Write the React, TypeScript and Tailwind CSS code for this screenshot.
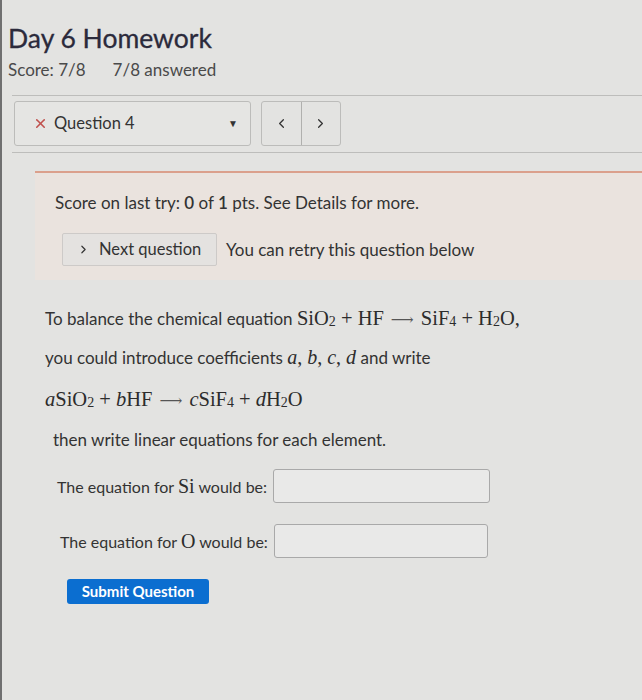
import { X, ChevronLeft, ChevronRight, ChevronRight as Caret } from "lucide-react";

const serif = "font-['Liberation_Serif','DejaVu_Serif',serif]";

function M({ children, size = "text-[20px]" }: { children: React.ReactNode; size?: string }) {
  return <span className={`${serif} ${size} text-[#2c2c2c]`}>{children}</span>;
}

function Sub({ children }: { children: React.ReactNode }) {
  return <sub className="text-[14px] relative -bottom-[1px]">{children}</sub>;
}

function Arrow() {
  return <span className="mx-[7px] text-[16px] text-[#555]">⟶</span>;
}

function AnswerRow({ el, labelPad, boxW }: { el: string; labelPad: string; boxW: string }) {
  return (
    <div className={`flex items-center ${labelPad}`}>
      <span className="text-[16px] text-[#333]">
        The equation for <M>{el}</M> would be:
      </span>
      <div className={`ml-[6px] h-[34px] ${boxW} rounded-[3px] border border-[#a9a9a9] bg-[#e9e9e8]`} />
    </div>
  );
}

export default function App() {
  return (
    <div className="w-[642px] h-[700px] overflow-hidden bg-[#e3e3e1] border-l-2 border-[#707070] font-['Lato','Open_Sans',sans-serif]">
      <div className="pt-[21px] pl-[6px]">
        <h1 className="text-[26.5px] leading-[34px] text-[#2b2a3b] [-webkit-text-stroke:0.3px_#2b2a3b]">Day 6 Homework</h1>
        <div className="mt-[2px] text-[17px] text-[#4a4a4a] flex gap-[27px]">
          <span>Score: 7/8</span>
          <span>7/8 answered</span>
        </div>
      </div>

      {/* question picker + prev/next */}
      <div className="mt-[12px] ml-[10px] border-t border-b border-[#bdbdbb] pt-[5px] pb-[6px] pl-[2px] flex gap-[10px]">
        <div className="w-[237px] h-[45px] rounded-[3px] border border-[#bcbcba] bg-[#e5e5e3] flex items-center pl-[18px] pr-[10px]">
          <X className="w-[15px] h-[15px] text-[#c0504d]" strokeWidth={2.5} />
          <span className="ml-[6px] text-[16.5px] text-[#333]">Question 4</span>
          <span className="ml-auto mr-[2px] text-[10px] text-[#333]">▼</span>
        </div>
        <div className="w-[80px] h-[45px] rounded-[3px] border border-[#bcbcba] flex">
          <div className="flex-1 flex items-center justify-center border-r border-[#b0b0ae]">
            <ChevronLeft className="w-[15px] h-[15px] text-[#333]" strokeWidth={2} />
          </div>
          <div className="flex-1 flex items-center justify-center">
            <ChevronRight className="w-[15px] h-[15px] text-[#333]" strokeWidth={2} />
          </div>
        </div>
      </div>

      {/* last try notice */}
      <div className="mt-[18px] ml-[33px] border-t-2 border-[#dba08c] bg-[#eae3de] h-[109px] pl-[20px] pt-[17px]">
        <p className="text-[17px] text-[#333]">
          Score on last try: <span className="font-semibold">0</span> of <span className="font-semibold">1</span> pts. See Details for more.
        </p>
        <div className="mt-[18px] ml-[7px] flex items-center">
          <div className="h-[33px] w-[155px] rounded-[2px] border border-[#cdcac8] bg-[#e4e2e0] flex items-center pl-[14px]">
            <Caret className="w-[13px] h-[13px] text-[#333]" strokeWidth={2.2} />
            <span className="ml-[9px] text-[16.5px] text-[#333]">Next question</span>
          </div>
          <span className="ml-[9px] text-[17px] text-[#333]">You can retry this question below</span>
        </div>
      </div>

      <div className="pl-[43px] pt-[25px]">
        <p className="text-[17px] text-[#333] leading-[26px]">
          To balance the chemical equation{" "}
          <M size="text-[20.5px]">
            SiO<Sub>2</Sub> + HF<Arrow />SiF<Sub>4</Sub> + H<Sub>2</Sub>O,
          </M>
        </p>
        <p className="mt-[11px] text-[17px] text-[#333] leading-[26px]">
          you could introduce coefficients{" "}
          <M>
            <i>a</i>, <i>b</i>, <i>c</i>, <i>d</i>
          </M>{" "}
          and write
        </p>
        <p className="mt-[15px] leading-[26px]">
          <M size="text-[20.5px]">
            <i>a</i>SiO<Sub>2</Sub> + <i>b</i>HF<Arrow /><i>c</i>SiF<Sub>4</Sub> + <i>d</i>H<Sub>2</Sub>O
          </M>
        </p>
        <p className="mt-[13px] ml-[8px] text-[17px] text-[#333] leading-[26px]">
          then write linear equations for each element.
        </p>

        <div className="mt-[16px] flex flex-col gap-[21px]">
          <AnswerRow el="Si" labelPad="pl-[12px]" boxW="w-[217px]" />
          <AnswerRow el="O" labelPad="pl-[15px]" boxW="w-[214px]" />
        </div>

        <button className="mt-[21px] ml-[22px] h-[25px] w-[142px] rounded-[3px] bg-[#0b6ed0] text-white text-[15px] font-bold">
          Submit Question
        </button>
      </div>
    </div>
  );
}
